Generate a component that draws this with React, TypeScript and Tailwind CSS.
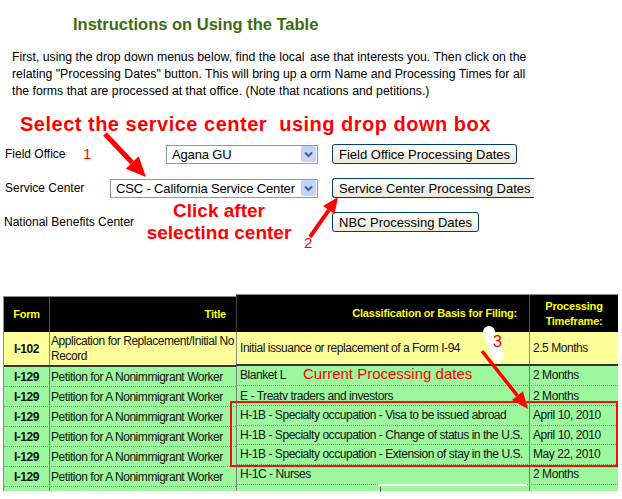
import React from 'react';

type BasisRow = {
    basis: string;
    time: string;
    height: string;
    clipped?: boolean;
};

const basisRows: BasisRow[] = [
    { basis: 'Blanket L', time: '2 Months', height: 'h-[20px]' },
    { basis: 'E - Treaty traders and investors', time: '2 Months', height: 'h-[20px]', clipped: true },
    { basis: 'H-1B - Specialty occupation - Visa to be issued abroad', time: 'April 10, 2010', height: 'h-[20px]' },
    { basis: 'H-1B - Specialty occupation - Change of status in the U.S.', time: 'April 10, 2010', height: 'h-[19px]' },
    { basis: 'H-1B - Specialty occupation - Extension of stay in the U.S.', time: 'May 22, 2010', height: 'h-[20px]' },
    { basis: 'H-1C - Nurses', time: '2 Months', height: 'h-[20px]' },
];

const petitionTitles = Array.from({ length: 6 }, () => 'Petition for A Nonimmigrant Worker');

function ComboBox({ value, width }: { value: string; width: string }) {
    return (
        <div className={`flex h-[19px] items-center justify-between border border-[#7f9db9] bg-white pl-[5px] pr-px ${width}`}>
            <span className="whitespace-nowrap text-[13px] leading-none tracking-[-0.15px]">{value}</span>
            <span className="flex h-[16px] w-[15px] items-center justify-center rounded-[2px] bg-[#c1d3fb]">
                <svg width="15" height="16" viewBox="0 0 15 16">
                    <path d="M4 6.5 L7.5 10 L11 6.5" stroke="#4d6185" strokeWidth="2" fill="none" />
                </svg>
            </span>
        </div>
    );
}

function XpButton({ label, className = '' }: { label: string; className?: string }) {
    return (
        <button
            className={`h-[20px] whitespace-nowrap rounded-[3px] border border-[#003c74] bg-linear-to-b from-white to-[#ece9d8] px-[6px] text-left text-[13px] leading-none text-black ${className}`}
        >
            {label}
        </button>
    );
}

export default function App() {
    return (
        <div className="relative h-[499px] w-[622px] overflow-hidden bg-white font-['Liberation_Sans',Arial,sans-serif] text-black">
            <h1 className="pl-[73px] pt-[14px] text-[16.5px] font-bold leading-[20px] text-[#3c6c0c]">
                Instructions on Using the Table
            </h1>

            <p className="mt-[15px] whitespace-nowrap pl-[12px] text-[12.3px] leading-[17px]">
                First, using the drop down menus below, find the local <span className="ml-[2px]">ase that interests you. Then click on the</span>
                <br />
                relating "Processing Dates" button. This will bring up a<span className="ml-[3px]">orm Name and Processing Times for all</span>
                <br />
                the forms that are processed at that office. (Note that n<span>cations and petitions.)</span>
            </p>

            <p className="mt-[12px] whitespace-pre pl-[20px] text-[20px] font-bold leading-[24px] tracking-[0.5px] text-[#ff0000]">
                Select the service center  using drop down box
            </p>

            {/* office / center pickers */}
            <div className="mt-[8px] flex flex-col gap-[14px] text-[12px]">
                <div className="flex h-[20px] items-center">
                    <div className="flex w-[318px] items-center justify-between pl-[5px]">
                        <span>Field Office</span>
                        <ComboBox value="Agana GU" width="w-[152px]" />
                    </div>
                    <XpButton label="Field Office Processing Dates" className="ml-[14px]" />
                </div>
                <div className="flex h-[20px] items-center">
                    <div className="flex w-[318px] items-center justify-between pl-[5px]">
                        <span>Service Center</span>
                        <ComboBox value="CSC - California Service Center" width="w-[208px]" />
                    </div>
                    <XpButton
                        label="Service Center Processing Dates"
                        className="ml-[14px] w-[202px] overflow-hidden rounded-r-none border-r-0"
                    />
                </div>
                <div className="flex h-[20px] items-center">
                    <div className="w-[318px] pl-[4px]">National Benefits Center</div>
                    <XpButton label="NBC Processing Dates" className="ml-[14px]" />
                </div>
            </div>

            {/* processing times table */}
            <div className="mt-[62px] flex items-start pl-[3px] text-[12px] tracking-[-0.45px] text-[#111]">
                <div className="mt-[2px] w-[233px] border-l border-[#8c8c8c]">
                    <div className="flex h-[36px] border-t border-[#8c8c8c] bg-black text-[11px] font-bold tracking-[-0.2px] text-[#ffff00]">
                        <div className="flex w-[45px] items-center justify-center">Form</div>
                        <div className="flex w-[187px] items-center justify-end border-l border-[#555] pr-[10px]">Title</div>
                    </div>
                    <div className="flex h-[35px] border-b-2 border-[#333] bg-[#ffff99]">
                        <div className="flex w-[45px] items-center justify-center font-bold">I-102</div>
                        <div className="flex w-[187px] items-center whitespace-nowrap border-l border-[#8c8c8c] pl-[1px] leading-[15px]">
                            Application for Replacement/Initial No
                            <br />
                            Record
                        </div>
                    </div>
                    {petitionTitles.map((title, i) => (
                        <div key={i} className="flex h-[20px] border-b border-dotted border-[#8c8c8c] bg-[#9cf89c]">
                            <div className="flex w-[45px] items-center justify-center font-bold">I-129</div>
                            <div className="flex w-[187px] items-center whitespace-nowrap border-l border-solid border-[#7a7a7a] pl-[1px]">
                                {title}
                            </div>
                        </div>
                    ))}
                    <div className="flex h-[4px] bg-[#9cf89c]">
                        <div className="w-[45px]" />
                        <div className="w-[187px] border-l border-[#7a7a7a]" />
                    </div>
                </div>

                <div className="w-[382px]">
                    <div className="flex h-[38px] border-t border-[#8c8c8c] bg-black text-[11px] font-bold tracking-[-0.2px] text-[#ffff00]">
                        <div className="flex w-[293px] items-center justify-end border-l border-[#444] pr-[12px]">
                            Classification or Basis for Filing:
                        </div>
                        <div className="flex w-[89px] items-center justify-center border-l border-[#555] text-center leading-[15px]">
                            Processing
                            <br />
                            Timeframe:
                        </div>
                    </div>
                    <div className="flex h-[34px] border-b-2 border-[#333] bg-[#ffff99]">
                        <div className="flex w-[293px] items-center whitespace-nowrap border-l border-[#8c8c8c] pl-[3px]">
                            Initial issuance or replacement of a Form I-94
                        </div>
                        <div className="flex w-[89px] items-center whitespace-nowrap border-l border-[#8c8c8c] pl-[3px]">
                            2.5 Months
                        </div>
                    </div>
                    {basisRows.map((row, i) => (
                        <div key={i} className={`flex border-b border-dotted border-[#8c8c8c] bg-[#9cf89c] ${row.height}`}>
                            <div className="w-[293px] whitespace-nowrap border-l border-solid border-[#7a7a7a] pl-[3px]">
                                <div className={row.clipped ? 'h-[14px] overflow-hidden leading-[20px]' : 'leading-[19px]'}>{row.basis}</div>
                            </div>
                            <div className="w-[89px] whitespace-nowrap border-l border-solid border-[#7a7a7a] pl-[3px]">
                                <div className={row.clipped ? 'h-[14px] overflow-hidden leading-[20px]' : 'leading-[19px]'}>{row.time}</div>
                            </div>
                        </div>
                    ))}
                    <div className="flex h-[6px] bg-[#9cf89c]">
                        <div className="w-[293px] border-l border-[#7a7a7a]" />
                        <div className="w-[89px] border-l border-[#7a7a7a]" />
                    </div>
                </div>
            </div>

            {/* hand-drawn notes on top */}
            <div className="pointer-events-none absolute inset-0">
                <span className="absolute left-[83px] top-[146px] text-[15px] leading-[15px] text-[#ff0000]">1</span>
                <div className="absolute left-[144px] top-[200px] h-[39px] w-[150px] overflow-hidden text-center text-[19px] font-bold leading-[22px] text-[#ff0000]">
                    Click after
                    <br />
                    selecting center
                </div>
                <span className="absolute left-[304px] top-[235px] text-[15px] leading-[15px] text-[#ff0000]">2</span>

                <svg className="absolute left-0 top-0" width="622" height="499" viewBox="0 0 622 499">
                    <line x1="489" y1="332" x2="498" y2="356" stroke="#fff" strokeWidth="12" strokeLinecap="round" />
                    <line x1="378" y1="485" x2="527" y2="485" stroke="#fff" strokeWidth="2" />
                    <line x1="380.5" y1="487" x2="380.5" y2="492" stroke="#555" strokeWidth="1" />

                    <line x1="105" y1="134" x2="132" y2="162.5" stroke="#ff0000" strokeWidth="5" />
                    <polygon points="146,177 125.7,168.7 138.7,156.3" fill="#ff0000" />

                    <line x1="310" y1="237" x2="328.8" y2="210.1" stroke="#ff0000" strokeWidth="4" />
                    <polygon points="338,197 334.5,214.1 323.1,206.1" fill="#ff0000" />

                    <line x1="482" y1="351" x2="517.4" y2="395.7" stroke="#ff0000" strokeWidth="3.5" />
                    <polygon points="528,409 511.9,400.1 522.9,391.3" fill="#ff0000" />
                </svg>

                <span className="absolute left-[493px] top-[334px] text-[16px] leading-[16px] text-[#ff0000]">3</span>
                <span className="absolute left-[303px] top-[365px] whitespace-nowrap text-[15px] leading-[18px] text-[#ff0000]">
                    Current Processing dates
                </span>
                <div className="absolute left-[230px] top-[401px] h-[66px] w-[388px] border-2 border-[#ee1111]" />
            </div>
        </div>
    );
}
